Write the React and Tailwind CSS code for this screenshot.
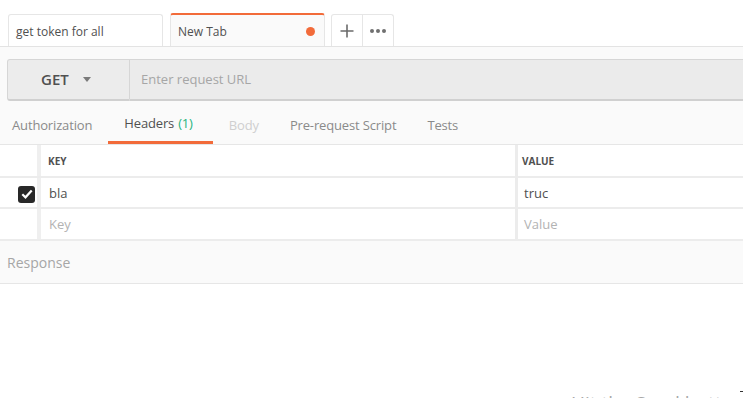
import React from "react";

export default function App() {
  return (
    <div className="w-[743px] h-[398px] overflow-hidden bg-white relative" style={{ fontFamily: '"Open Sans", "Liberation Sans", sans-serif' }}>
      {/* Tab strip */}
      <div className="h-[47px] flex items-end pl-[8px] gap-[7px] border-b border-[#e3e3e3]">
        <div className="w-[155px] h-[32px] bg-white border border-b-0 border-[#e6e6e6] rounded-t-[3px] flex items-center pl-[7px] pt-[2px] text-[12px] text-[#505050]">
          get token for all
        </div>
        <div className="w-[155px] h-[33px] bg-[#fafafa] border-t-2 border-[#f26b3a] border-x border-x-[#e6e6e6] rounded-t-[3px] flex items-center justify-between pl-[7px] pr-[9px] pt-[2px] text-[12px] text-[#505050]">
          <span>New Tab</span>
          <span className="w-[9px] h-[9px] rounded-full bg-[#f26b3a]" />
        </div>
        <div className="h-[32px] flex border border-b-0 border-[#e6e6e6] rounded-t-[3px] -ml-[1px]">
          <div className="w-[31px] flex items-center justify-center border-r border-[#e6e6e6]">
            <svg width="14" height="14" viewBox="0 0 14 14"><path d="M7 0.5v13M0.5 7h13" stroke="#6b6b6b" strokeWidth="1.6" /></svg>
          </div>
          <div className="w-[30px] flex items-center justify-center gap-[2px]">
            <span className="w-[4px] h-[4px] rounded-full bg-[#707070]" />
            <span className="w-[4px] h-[4px] rounded-full bg-[#707070]" />
            <span className="w-[4px] h-[4px] rounded-full bg-[#707070]" />
          </div>
        </div>
      </div>

      {/* Request area */}
      <div className="bg-[#fafafa] pt-[12px] pl-[7px]">
        <div className="flex h-[42px]">
          <div className="w-[123px] bg-[#ececec] border border-[#d6d6d6] border-b-2 border-b-[#d0d0d0] rounded-l-[3px] flex items-center pl-[33px] gap-[14px]">
            <span className="text-[15px] font-semibold text-[#505050]">GET</span>
            <svg width="8" height="5" viewBox="0 0 8 5"><path d="M0 0h8L4 5z" fill="#7a7a7a" /></svg>
          </div>
          <div className="flex-1 bg-[#ebebeb] border-t border-[#d6d6d6] border-b-2 border-b-[#d0d0d0] flex items-center pl-[11px] text-[13px] text-[#a6a6a6]">
            Enter request URL
          </div>
        </div>

        {/* Sub tabs */}
        <div className="h-[44px] flex items-stretch -ml-[7px] text-[13px] tracking-[-0.15px] border-b border-[#e6e6e6]">
          <div className="pl-[12px] pr-[16px] pt-[6px] flex items-center text-[#8a8a8a]">Authorization</div>
          <div className="pl-[16px] pr-[20px] pt-[6px] flex items-center text-[#505050] border-b-[3px] border-[#f26b3a]">
            Headers <span className="ml-[4px] text-[#26b47f]">(1)</span>
          </div>
          <div className="px-[16px] pt-[6px] flex items-center text-[#cfcfcf]">Body</div>
          <div className="px-[15px] pt-[6px] flex items-center text-[#8a8a8a]">Pre-request Script</div>
          <div className="px-[16px] pt-[6px] flex items-center text-[#8a8a8a]">Tests</div>
        </div>
      </div>

      {/* Headers table */}
      <div className="bg-white">
        <div className="flex h-[33px] border-b-2 border-[#ececec]">
          <div className="w-[41px] border-r-4 border-[#efefef]" />
          <div className="w-[477px] border-r-[3px] border-[#ececec] flex items-center pl-[7px] pt-[1px] text-[10px] font-bold text-[#505050]">KEY</div>
          <div className="flex-1 flex items-center pl-[4px] pt-[1px] text-[10px] font-bold text-[#505050]">VALUE</div>
        </div>
        <div className="flex h-[31px] border-b-2 border-[#ececec]">
          <div className="w-[41px] border-r-4 border-[#efefef] flex items-center justify-end pr-[2px] pt-[3px]">
            <div className="w-[17px] h-[17px] rounded-[3px] bg-[#282828] flex items-center justify-center">
              <svg width="12" height="10" viewBox="0 0 12 10"><path d="M1.3 5.2l3.2 3.1 6.2-6.8" stroke="#fff" strokeWidth="2.2" fill="none" /></svg>
            </div>
          </div>
          <div className="w-[477px] border-r-[3px] border-[#ececec] flex items-center pl-[8px] pt-[3px] text-[13px] text-[#505050]">bla</div>
          <div className="flex-1 flex items-center pl-[6px] pt-[3px] text-[13px] text-[#505050]">truc</div>
        </div>
        <div className="flex h-[32px] border-b-2 border-[#ececec]">
          <div className="w-[41px] border-r-4 border-[#efefef]" />
          <div className="w-[477px] border-r-[3px] border-[#ececec] flex items-center pl-[8px] pt-[1px] text-[13px] text-[#b3b3b3]">Key</div>
          <div className="flex-1 flex items-center pl-[6px] pt-[1px] text-[13px] text-[#b3b3b3]">Value</div>
        </div>
      </div>

      {/* Response */}
      <div className="h-[43px] bg-[#fafafa] border-b border-[#e6e6e6] flex items-center pl-[7px] text-[14px] text-[#a6a6a6]">
        Response
      </div>

      <div className="absolute left-[571px] top-[389px] text-[19px] leading-[28px] text-[#a8a8a8] whitespace-nowrap">Hit the Send button</div>
      <div className="absolute left-[740px] top-[391px] w-[3px] h-[1px] bg-[#333]" />
    </div>
  );
}
